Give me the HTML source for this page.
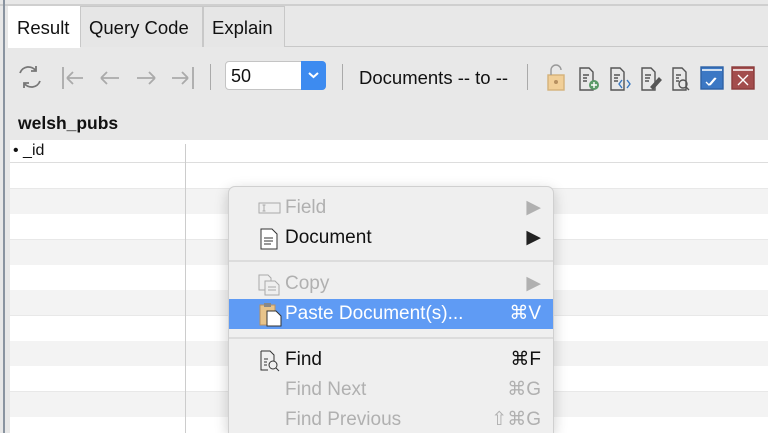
<!DOCTYPE html>
<html style="width:768px;height:433px;overflow:hidden"><head><style>
*{margin:0;padding:0;box-sizing:border-box}
body{width:768px;height:433px;overflow:hidden;background:#e8e8e8;font-family:"Liberation Sans",sans-serif;position:relative;color:#111}
.abs{position:absolute}
.tab{position:absolute;top:6px;height:41px;border:1px solid #c8c8c8;border-bottom:none;font-size:18.5px;line-height:41px;padding-left:8px;background:#e6e6e6}
.row{position:absolute;left:10px;width:758px;height:25px}
.mi{position:absolute;left:0;width:324px;height:30px;font-size:19px;line-height:30px}
.mi .t{position:absolute;left:56px}
.mi .k{position:absolute;right:12px}
.dis{color:#b0b0b0}
.sep{position:absolute;left:0;width:324px;height:2px;background:#dcdcdc}
</style></head><body>
<div class="abs" style="left:0;top:4px;width:768px;height:2px;background:#cfcfcf"></div>
<div class="abs" style="left:3px;top:0;width:2px;height:433px;background:#8a94a0"></div>
<div class="abs" style="left:8px;top:46px;width:760px;height:1px;background:#c8c8c8"></div>
<div class="tab" style="left:8px;width:72px;background:#fff;border-color:#fff;height:42px">Result</div>
<div class="tab" style="left:80px;width:123px">Query Code</div>
<div class="tab" style="left:203px;width:82px">Explain</div>

<svg class="abs" style="left:15px;top:62px" width="190" height="30" fill="none" stroke="#777" stroke-width="1.8">
<path d="M5 11a9 9 0 0 1 16-2M25 19a9 9 0 0 1-16 2"/><path d="M21 4v5h-5M9 26v-5h5"/>
<path d="M48 5v22M52 16h16M52 16l6-6M52 16l6 6" stroke="#aaa"/>
<path d="M86 16h18M86 16l6-6M86 16l6 6" stroke="#aaa"/>
<path d="M122 16h18M140 16l-6-6M140 16l-6 6" stroke="#aaa"/>
<path d="M157 16h16M173 16l-6-6M173 16l-6 6M178 5v22" stroke="#aaa"/>
</svg>
<div class="abs" style="left:210px;top:64px;width:1px;height:26px;background:#aaa"></div>
<div class="abs" style="left:225px;top:61px;width:101px;height:29px;background:#fff;border:1px solid #c4c4c4;border-radius:4px;font-size:18px;line-height:28px;padding-left:5px">50</div>
<div class="abs" style="left:301px;top:61px;width:25px;height:29px;background:#3d8bf0;border-radius:0 4px 4px 0"><svg width="25" height="29"><path d="M8 12l4.5 4 4.5-4" stroke="#fff" stroke-width="2" fill="none"/></svg></div>
<div class="abs" style="left:342px;top:64px;width:1px;height:26px;background:#aaa"></div>
<div class="abs" style="left:359px;top:67px;font-size:18.5px">Documents -- to --</div>
<div class="abs" style="left:527px;top:64px;width:1px;height:26px;background:#aaa"></div>
<svg class="abs" style="left:544px;top:64px" width="215" height="28" fill="none" stroke="#555" stroke-width="1.4">
<rect x="4" y="11" width="16" height="15" fill="#f1cf98" stroke="#d5b27a"/><path d="M7 11V6a5 5 0 0 1 10 0" stroke="#999"/><circle cx="12" cy="18" r="2" fill="#b69060" stroke="none"/>
<path d="M36 4h9l4 4v18H36z"/><path d="M39 11h6M39 14h4M39 17h4"/><circle cx="50" cy="21" r="5" fill="#5a9a68" stroke="none"/><path d="M50 18v6M47 21h6" stroke="#fff"/>
<path d="M67 4h9l4 4v18H67z"/><path d="M70 11h6M70 14h4M70 17h4"/><path d="M78 16l-3 4 3 4M83 16l3 4-3 4" stroke="#3a78c0"/>
<path d="M98 4h9l4 4v18H98z"/><path d="M101 11h6M101 14h5M101 17h4"/><path d="M107 23l8-9 2 2-8 9z" fill="#555"/>
<path d="M129 4h9l4 4v18h-13z"/><path d="M132 11h5M132 14h3M132 17h3"/><circle cx="139" cy="20" r="4"/><path d="M142 23l3 3"/>
<rect x="157" y="3" width="22" height="22" fill="#3c78c4" stroke="#2e62a6"/><path d="M158 6h20" stroke="#fff"/><path d="M162 18l3 3 6-7M166 21l6-7" stroke="#fff"/>
<rect x="188" y="3" width="22" height="22" fill="#a34d4d" stroke="#8a3a3a"/><path d="M189 6h20" stroke="#fff"/><path d="M194 11l10 10M204 11l-10 10" stroke="#fff"/>
</svg>

<div class="abs" style="left:18px;top:113px;font-size:17.5px;font-weight:bold">welsh_pubs</div>
<div class="row" style="top:140px;height:23px;background:#fff;border-bottom:1px solid #ddd"></div>
<div class="abs" style="left:13px;top:142px;font-size:16px">• _id</div>
<div class="row" style="top:163px;background:#fff"></div>
<div class="row" style="top:189px;background:#f3f3f3"></div>
<div class="row" style="top:214px;background:#fff"></div>
<div class="row" style="top:240px;background:#f3f3f3"></div>
<div class="row" style="top:265px;background:#fff"></div>
<div class="row" style="top:290px;background:#f3f3f3"></div>
<div class="row" style="top:316px;background:#fff"></div>
<div class="row" style="top:341px;background:#f3f3f3"></div>
<div class="row" style="top:366px;background:#fff"></div>
<div class="row" style="top:392px;background:#f3f3f3"></div>
<div class="row" style="top:417px;height:16px;background:#fff"></div>
<div class="abs" style="left:185px;top:144px;width:1px;height:289px;background:#ccc"></div>

<div class="abs" style="left:228px;top:186px;width:326px;height:247px;background:#efefef;border:1px solid #d0d0d0;border-bottom:none;border-radius:7px 7px 0 0;box-shadow:0 4px 14px rgba(0,0,0,.2)">
 <div class="mi dis" style="top:6px"><svg class="abs" style="left:29px;top:8px" width="24" height="14"><rect x="1" y="2" width="21" height="10" fill="none" stroke="#aaa"/><path d="M6 4v6M4.5 4h3M4.5 10h3" stroke="#aaa"/></svg><span class="t">Field</span><span class="k" style="color:#b0b0b0">▶</span></div>
 <div class="mi" style="top:36px"><svg class="abs" style="left:31px;top:5px" width="20" height="22"><path d="M1 1h11l5 5v15H1z" fill="#fff" stroke="#333"/><path d="M4 10h9M4 13h9M4 16h7" stroke="#333"/></svg><span class="t">Document</span><span class="k" style="color:#222">▶</span></div>
 <div class="sep" style="top:73px"></div>
 <div class="mi dis" style="top:82px"><svg class="abs" style="left:29px;top:5px" width="24" height="22"><path d="M1 1h9l3 3v12H1z" fill="none" stroke="#aaa"/><path d="M7 7h10l4 4v10H7z" fill="#efefef" stroke="#aaa"/><path d="M10 13h8M10 16h8" stroke="#aaa"/></svg><span class="t">Copy</span><span class="k" style="color:#b0b0b0">▶</span></div>
 <div class="mi" style="top:112px;background:#5f9bf4;color:#fff;height:30px"><svg class="abs" style="left:30px;top:3px" width="24" height="25"><rect x="1" y="3" width="15" height="20" fill="#e8c48a" stroke="#b89060"/><path d="M8 9h9l5 5v10H8z" fill="#fff" stroke="#333"/><rect x="5" y="1" width="7" height="4" fill="#888"/></svg><span class="t">Paste Document(s)...</span><span class="k">⌘V</span></div>
 <div class="sep" style="top:150px"></div>
 <div class="mi" style="top:158px"><svg class="abs" style="left:31px;top:5px" width="22" height="22"><path d="M1 1h9l4 4v6M1 1v19h7" fill="none" stroke="#333"/><path d="M4 9h4M4 12h3M4 15h3" stroke="#333"/><circle cx="13" cy="15" r="4" fill="none" stroke="#333"/><path d="M16 18l3 3" stroke="#333"/></svg><span class="t">Find</span><span class="k">⌘F</span></div>
 <div class="mi dis" style="top:188px"><span class="t">Find Next</span><span class="k">⌘G</span></div>
 <div class="mi dis" style="top:218px"><span class="t">Find Previous</span><span class="k">⇧⌘G</span></div>
</div>
</body></html>
